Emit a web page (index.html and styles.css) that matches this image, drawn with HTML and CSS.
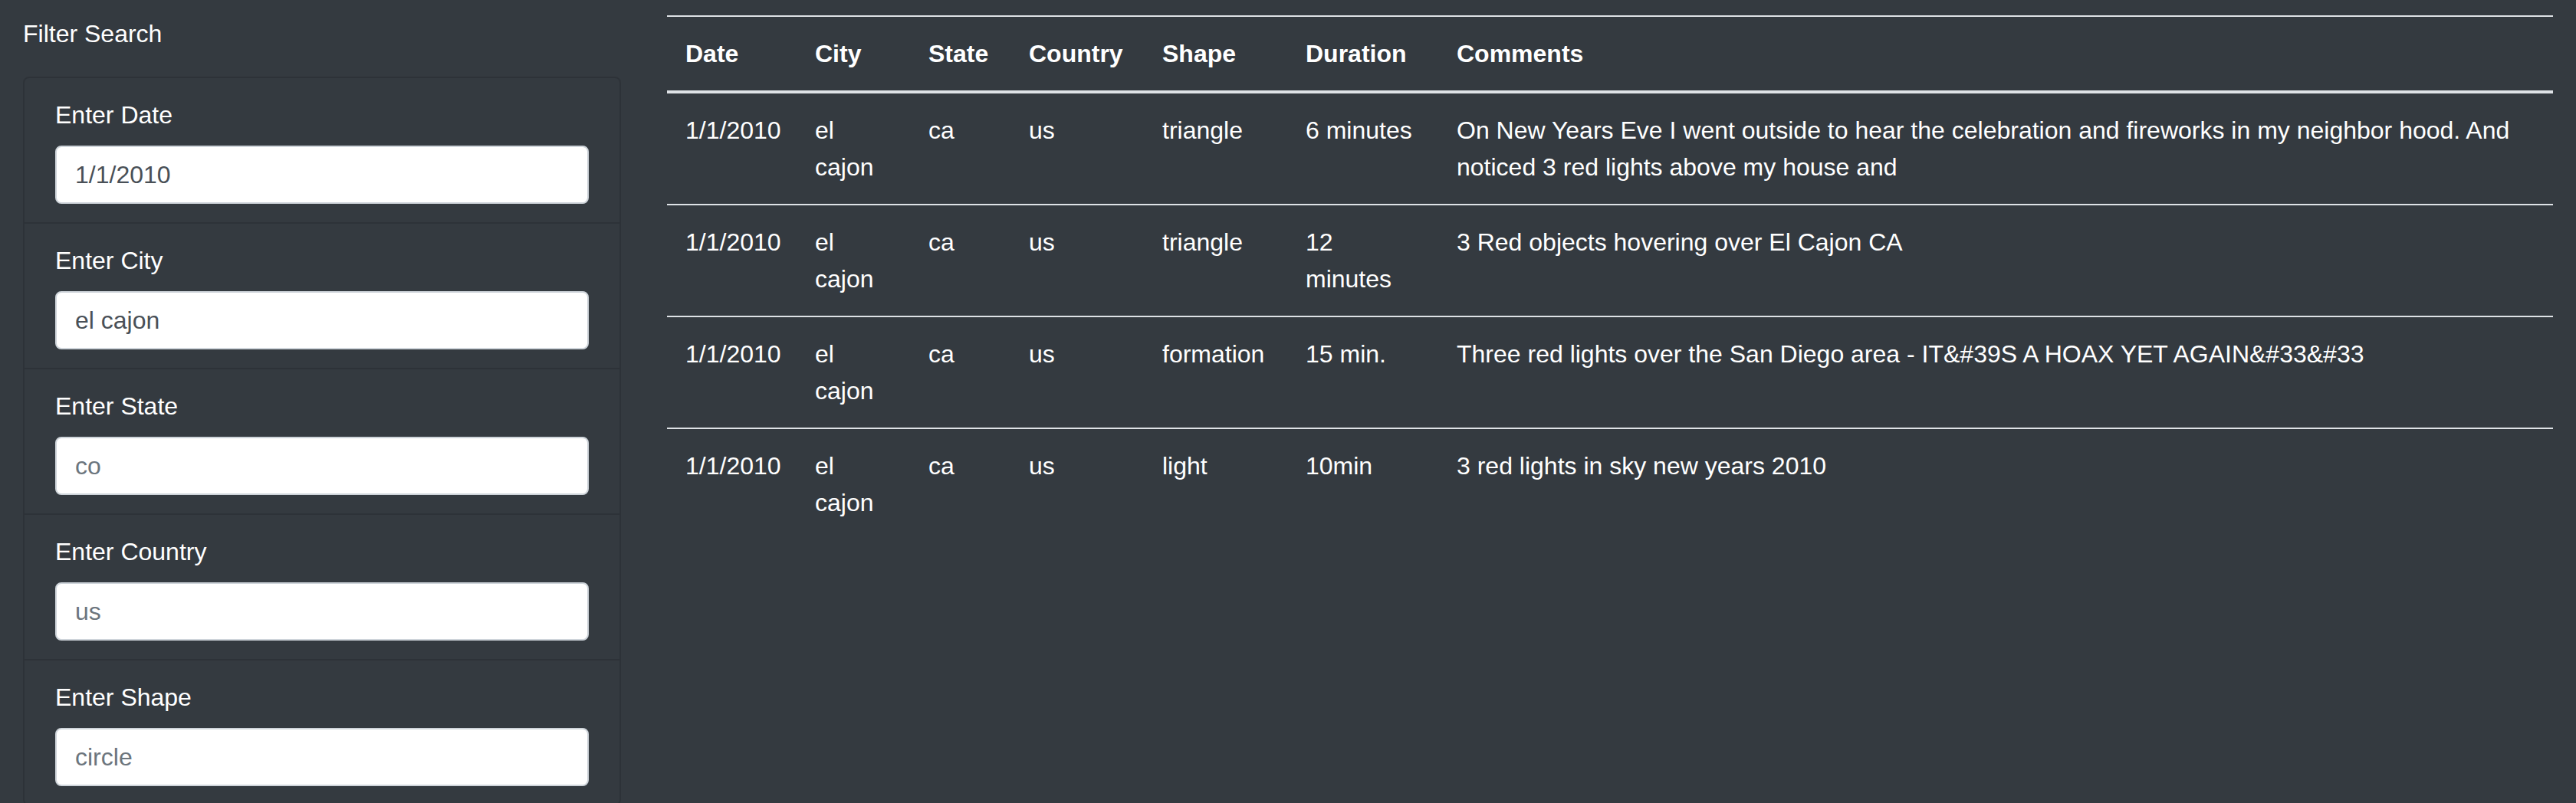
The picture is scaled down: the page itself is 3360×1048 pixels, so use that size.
FILE: index.html
```html
<!DOCTYPE html>
<html lang="en">
<head>
<meta charset="utf-8">
<title>UFO Sightings</title>
<link rel="stylesheet" href="styles.css">
</head>
<body>
<div class="page">
  <aside class="sidebar">
    <div class="filter-title">Filter Search</div>
    <div class="filter-card">
      <div class="filter-item">
        <label class="filter-label" for="datetime">Enter Date</label>
        <input class="filter-input" id="datetime" type="text" value="1/1/2010">
      </div>
      <div class="filter-item">
        <label class="filter-label" for="city">Enter City</label>
        <input class="filter-input" id="city" type="text" value="el cajon">
      </div>
      <div class="filter-item">
        <label class="filter-label" for="state">Enter State</label>
        <input class="filter-input" id="state" type="text" placeholder="co">
      </div>
      <div class="filter-item">
        <label class="filter-label" for="country">Enter Country</label>
        <input class="filter-input" id="country" type="text" placeholder="us">
      </div>
      <div class="filter-item">
        <label class="filter-label" for="shape">Enter Shape</label>
        <input class="filter-input" id="shape" type="text" placeholder="circle">
      </div>
    </div>
  </aside>
  <main class="main">
    <table class="ufo-table">
      <thead>
        <tr>
          <th class="c-date">Date</th>
          <th class="c-city">City</th>
          <th class="c-state">State</th>
          <th class="c-country">Country</th>
          <th class="c-shape">Shape</th>
          <th class="c-duration">Duration</th>
          <th class="c-comments">Comments</th>
        </tr>
      </thead>
      <tbody>
        <tr>
          <td>1/1/2010</td><td>el cajon</td><td>ca</td><td>us</td><td>triangle</td><td>6 minutes</td>
          <td>On New Years Eve I went outside to hear the celebration and fireworks in my neighbor hood. And noticed 3 red lights above my house and</td>
        </tr>
        <tr>
          <td>1/1/2010</td><td>el cajon</td><td>ca</td><td>us</td><td>triangle</td><td>12 minutes</td>
          <td>3 Red objects hovering over El Cajon CA</td>
        </tr>
        <tr>
          <td>1/1/2010</td><td>el cajon</td><td>ca</td><td>us</td><td>formation</td><td>15 min.</td>
          <td>Three red lights over the San Diego area - IT&amp;#39S A HOAX YET AGAIN&amp;#33&amp;#33</td>
        </tr>
        <tr>
          <td>1/1/2010</td><td>el cajon</td><td>ca</td><td>us</td><td>light</td><td>10min</td>
          <td>3 red lights in sky new years 2010</td>
        </tr>
      </tbody>
    </table>
  </main>
</div>
</body>
</html>
```

FILE: styles.css
```css
html {
  background: #343a40;
}
body {
  margin: 0;
  background: #343a40;
  color: #ffffff;
  font-family: "Liberation Sans", Arial, sans-serif;
  font-size: 32px;
  line-height: 48px;
}
.page {
  display: flex;
  align-items: flex-start;
  gap: 60px;
  padding: 20px 30px 0;
}
.sidebar {
  width: 780px;
  flex: 0 0 780px;
}
.filter-title {
  margin-bottom: 32px;
}
.filter-card {
  border: 2px solid rgba(0, 0, 0, 0.125);
  border-radius: 8px;
}
.filter-item {
  display: flex;
  flex-direction: column;
  padding: 24px 40px;
  border-bottom: 2px solid rgba(0, 0, 0, 0.125);
}
.filter-item:last-child {
  border-bottom: 0;
}
.filter-label {
  display: block;
  margin-bottom: 16px;
  color: #ffffff;
}
.filter-input {
  box-sizing: border-box;
  width: 100%;
  height: 76px;
  padding: 12px 24px;
  margin: 0;
  border: 2px solid #ced4da;
  border-radius: 8px;
  background: #ffffff;
  color: #495057;
  font-family: "Liberation Sans", Arial, sans-serif;
  font-size: 32px;
  line-height: 48px;
  outline: none;
}
.filter-input::placeholder {
  color: #6c757d;
  opacity: 1;
}
.main {
  flex: 1 1 auto;
  min-width: 0;
}
.ufo-table {
  width: 100%;
  table-layout: fixed;
  border-collapse: separate;
  border-spacing: 0;
  color: #ffffff;
}
.ufo-table th,
.ufo-table td {
  padding: 24px;
  text-align: left;
  vertical-align: top;
  border-top: 2px solid #dee2e6;
}
.ufo-table th {
  font-weight: bold;
  border-bottom: 4px solid #dee2e6;
}
.ufo-table tbody tr:first-child td {
  border-top: 0;
}
.c-date { width: 169px; }
.c-city { width: 148px; }
.c-state { width: 131px; }
.c-country { width: 174px; }
.c-shape { width: 187px; }
.c-duration { width: 197px; }
.ufo-table th,
.ufo-table td {
  box-sizing: border-box;
}
```
